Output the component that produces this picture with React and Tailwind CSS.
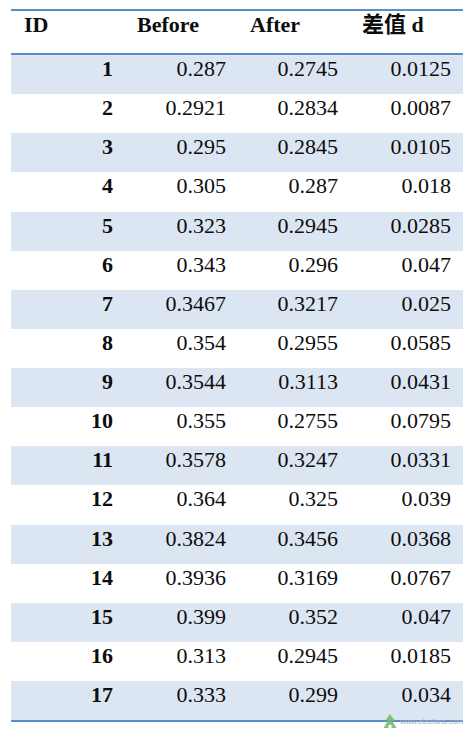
import React from 'react';

const rows = [
  [1, '0.287', '0.2745', '0.0125'],
  [2, '0.2921', '0.2834', '0.0087'],
  [3, '0.295', '0.2845', '0.0105'],
  [4, '0.305', '0.287', '0.018'],
  [5, '0.323', '0.2945', '0.0285'],
  [6, '0.343', '0.296', '0.047'],
  [7, '0.3467', '0.3217', '0.025'],
  [8, '0.354', '0.2955', '0.0585'],
  [9, '0.3544', '0.3113', '0.0431'],
  [10, '0.355', '0.2755', '0.0795'],
  [11, '0.3578', '0.3247', '0.0331'],
  [12, '0.364', '0.325', '0.039'],
  [13, '0.3824', '0.3456', '0.0368'],
  [14, '0.3936', '0.3169', '0.0767'],
  [15, '0.399', '0.352', '0.047'],
  [16, '0.313', '0.2945', '0.0185'],
  [17, '0.333', '0.299', '0.034'],
];

const cols = 'grid grid-cols-[115px_113px_112px_112px]';

// faint site watermark over the bottom rule
function Watermark() {
  return (
    <div className="absolute right-[11px] bottom-[8px] flex items-center gap-[3px]">
      <svg width="14" height="15" viewBox="0 0 14 15">
        <path d="M7 0 L12 7 L9.5 7 L13.5 14 L8.5 14 L8.5 11 L5.5 11 L5.5 14 L0.5 14 L4.5 7 L2 7 Z" fill="#74b868" opacity="0.85" />
      </svg>
      <span className="text-[8px] leading-none text-[#a3aec0] tracking-tight font-['Liberation_Sans',sans-serif]">
        www.elecfans.com
      </span>
    </div>
  );
}

export default function App() {
  return (
    <div className="relative w-[474px] h-[737px] bg-white pt-[9px] pl-[11px] font-['Liberation_Serif','Times_New_Roman','DejaVu_Serif','Noto_Sans_CJK_SC',serif]">
      <div className="w-[452px] border-y-2 border-[#5b8bc9] text-[22px] leading-[24px] text-[#0d0d0d]">
        <div className={`${cols} h-[44px] border-b-2 border-[#5b8bc9] font-bold`}>
          <div className="pl-[13px] pt-[2px]">ID</div>
          <div className="pl-[11px] pt-[2px]">Before</div>
          <div className="pl-[11px] pt-[2px]">After</div>
          <div className="pl-[11px] pt-[2px]">差值 d</div>
        </div>
        {rows.map(([id, before, after, d], i) => (
          <div key={id} className={`${cols} h-[39.125px] ${i % 2 === 0 ? 'bg-[#dce6f2]' : 'bg-white'}`}>
            <div className="pr-[13px] pt-[2px] text-right font-bold">{id}</div>
            <div className="pr-[13px] pt-[2px] text-right font-normal">{before}</div>
            <div className="pr-[13px] pt-[2px] text-right font-normal">{after}</div>
            <div className="pr-[12px] pt-[2px] text-right font-normal">{d}</div>
          </div>
        ))}
      </div>
      <Watermark />
    </div>
  );
}
